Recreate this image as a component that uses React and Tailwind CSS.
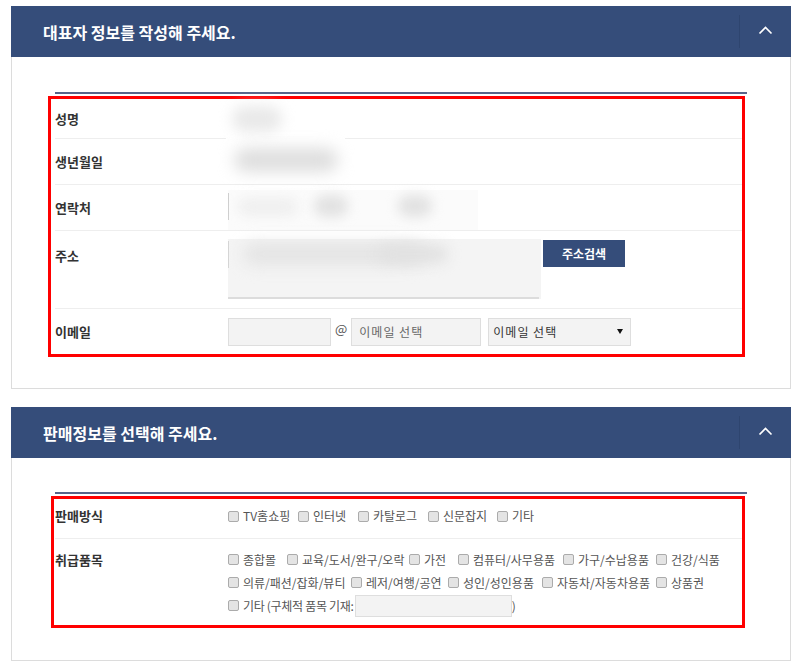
import React from "react";

const FONT = "font-['Noto_Sans_CJK_KR','Noto_Sans',sans-serif]";

function Chevron() {
  return (
    <svg width="15" height="9" viewBox="0 0 15 9">
      <polyline points="1.5,7.5 7.5,1.5 13.5,7.5" fill="none" stroke="white" strokeWidth="1.7" />
    </svg>
  );
}

function Header({ title }) {
  return (
    <div className="flex h-[51px] items-center bg-[#354d7a]">
      <div className="flex-1 pl-[32px] text-[16px] font-bold leading-none text-white">{title}</div>
      <div className="h-[33px] w-px bg-[#2e456f]" />
      <div className="flex w-[51px] items-center justify-center pb-[2px]">
        <Chevron />
      </div>
    </div>
  );
}

function Box() {
  return <span className="inline-block h-[11px] w-[11px] shrink-0 rounded-[2px] border border-[#ababab] bg-[#e4e4e4]" />;
}

function Check({ label, w, cls = "" }) {
  return (
    <div className={`flex shrink-0 items-center gap-[4px] whitespace-nowrap ${w}`}>
      <Box />
      <span className={cls}>{label}</span>
    </div>
  );
}

export default function App() {
  return (
    <div className={`h-[671px] w-[800px] overflow-hidden bg-white pt-[6px] ${FONT}`}>
      {/* Panel 1 */}
      <div className="ml-[11px] w-[780px]">
        <Header title="대표자 정보를 작성해 주세요." />
        <div className="border-x border-b border-[#dcdcdc] px-[43px] pb-[31px] pt-[35px]">
          <div className="h-[2px] bg-[#56658b]" />
          <div className="-ml-[7px] mt-[2px] w-[697px] border-[3px] border-[#ff0000] pl-[4px]">
            {/* 성명 */}
            <div className="relative flex h-[40px] items-center border-b border-[#eeeeee]">
              <div className="w-[173px] text-[13px] font-bold text-[#333]">성명</div>
              <div className="absolute left-[171px] top-[3px] z-10 h-[77px] w-[119px] bg-white">
                <div className="absolute left-[6px] top-[4px] h-[26px] w-[50px] rounded-full bg-[#e9e9e9] blur-[7px]" />
                <div className="absolute left-[8px] top-[46px] h-[24px] w-[104px] rounded-full bg-[#dedede] blur-[8px]" />
              </div>
            </div>
            {/* 생년월일 */}
            <div className="flex h-[46px] items-center border-b border-[#eeeeee]">
              <div className="w-[173px] text-[13px] font-bold text-[#333]">생년월일</div>
            </div>
            {/* 연락처 */}
            <div className="flex h-[46px] items-center border-b border-[#eeeeee]">
              <div className="w-[173px] text-[13px] font-bold text-[#333]">연락처</div>
              <div className="relative h-[40px] w-[250px] self-end bg-[#fbfbfb]">
                <div className="absolute left-0 top-[3px] h-[27px] w-px bg-[#cfcfcf]" />
                <div className="absolute left-[10px] top-[8px] h-[18px] w-[60px] rounded-full bg-[#efefef] blur-[6px]" />
                <div className="absolute left-[86px] top-[5px] h-[22px] w-[34px] rounded-full bg-[#e2e2e2] blur-[6px]" />
                <div className="absolute left-[170px] top-[5px] h-[22px] w-[34px] rounded-full bg-[#e2e2e2] blur-[6px]" />
              </div>
            </div>
            {/* 주소 */}
            <div className="flex h-[78px] items-start border-b border-[#eeeeee] pt-[8px]">
              <div className="w-[173px] pt-[7px] text-[13px] font-bold text-[#333]">주소</div>
              <div className="relative h-[60px] w-[313px] bg-[#f4f4f4]">
                <div className="absolute left-0 top-[2px] h-[27px] w-px bg-[#d5d5d5]" />
                <div className="absolute left-[15px] top-[4px] h-[22px] w-[180px] rounded-full bg-[#e4e4e4] blur-[8px]" />
                <div className="absolute left-[150px] top-[6px] h-[18px] w-[70px] rounded-full bg-[#e1e1e1] blur-[7px]" />
                <div className="absolute bottom-0 left-0 h-[2px] w-[311px] bg-[#dcdcdc]" />
              </div>
              <button className="ml-[2px] mt-[1px] h-[27px] w-[82px] bg-[#354d7a] text-[12px] font-bold text-white">
                주소검색
              </button>
            </div>
            {/* 이메일 */}
            <div className="flex h-[45px] items-center">
              <div className="w-[173px] text-[13px] font-bold text-[#333]">이메일</div>
              <div className="h-[28px] w-[103px] border border-[#dedede] bg-[#f3f3f3]" />
              <span className="mx-[4px] -mt-[6px] text-[13px] text-[#555]">@</span>
              <div className="flex h-[28px] w-[130px] items-center border border-[#dedede] bg-[#f3f3f3] pl-[7px] text-[12px] tracking-[1px] text-[#666]">
                이메일 선택
              </div>
              <div className="ml-[7px] flex h-[28px] w-[143px] items-center justify-between border border-[#dedede] bg-[#f3f3f3] pl-[4px] pr-[7px] text-[12px] tracking-[1px] text-[#333]">
                <span>이메일 선택</span>
                <svg width="6" height="5" viewBox="0 0 6 5">
                  <polygon points="0,0 6,0 3,5" fill="#111" />
                </svg>
              </div>
            </div>
          </div>
        </div>
      </div>

      {/* Panel 2 */}
      <div className="ml-[11px] mt-[18px] w-[780px]">
        <Header title="판매정보를 선택해 주세요." />
        <div className="border-x border-b border-[#dcdcdc] px-[43px] pb-[32px] pt-[34px]">
          <div className="h-[2px] bg-[#56658b]" />
          <div className="-ml-[4px] mt-[2px] w-[694px] border-[3px] border-[#ff0000] pl-[1px] text-[12px] text-[#555]">
            <div className="flex h-[40px] items-start border-b border-[#eeeeee] pt-[8px] leading-[18px]">
              <div className="w-[173px] text-[13px] font-bold text-[#333]">판매방식</div>
              <Check label="TV홈쇼핑" w="w-[70px]" />
              <Check label="인터넷" w="w-[60px]" />
              <Check label="카탈로그" w="w-[70px]" />
              <Check label="신문잡지" w="w-[69px]" />
              <Check label="기타" w="" />
            </div>
            <div className="flex items-start pb-[8px] pt-[9px] leading-[23px]">
              <div className="w-[173px] text-[13px] font-bold text-[#333]">취급품목</div>
              <div className="flex flex-col">
                <div className="flex h-[23px] items-center">
                  <Check label="종합몰" w="w-[59px]" />
                  <Check label="교육/도서/완구/오락" w="w-[122px]" />
                  <Check label="가전" w="w-[49px]" />
                  <Check label="컴퓨터/사무용품" w="w-[105px]" />
                  <Check label="가구/수납용품" w="w-[93px]" />
                  <Check label="건강/식품" w="" />
                </div>
                <div className="flex h-[23px] items-center">
                  <Check label="의류/패션/잡화/뷰티" w="w-[123px]" />
                  <Check label="레저/여행/공연" w="w-[97px]" />
                  <Check label="성인/성인용품" w="w-[94px]" />
                  <Check label="자동차/자동차용품" w="w-[114px]" />
                  <Check label="상품권" w="" />
                </div>
                <div className="flex h-[23px] items-center">
                  <Check label="기타 (구체적 품목 기재:" w="" cls="tracking-[-0.3px]" />
                  <div className="ml-px h-[22px] w-[157px] border border-[#dedede] bg-[#f3f3f3]" />
                  <span>)</span>
                </div>
              </div>
            </div>
          </div>
        </div>
      </div>
    </div>
  );
}
